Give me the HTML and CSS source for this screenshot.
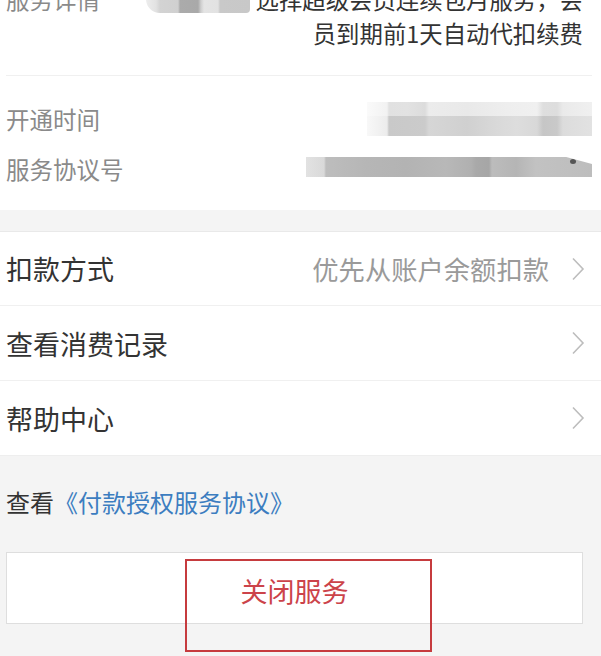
FILE: index.html
```html
<!DOCTYPE html>
<html lang="zh-CN">
<head>
<meta charset="utf-8">
<title>服务详情</title>
<link rel="stylesheet" href="styles.css">
</head>
<body>
<div class="page">
  <section class="card detail">
    <div class="detail-row">
      <span class="label">服务详情</span>
      <span class="pill"></span>
      <p class="detail-text">选择超级会员连续包月服务，会<br>员到期前1天自动代扣续费</p>
    </div>
    <div class="info">
      <div class="info-row"><span class="label">开通时间</span><span class="blur blur-time"></span></div>
      <div class="info-row"><span class="label">服务协议号</span><span class="blur blur-no"><span class="dot"></span></span></div>
    </div>
  </section>

  <section class="card menu">
    <div class="menu-row">
      <span class="menu-label">扣款方式</span>
      <span class="menu-value">优先从账户余额扣款</span>
      <svg class="chev" viewBox="0 0 14 24" width="14" height="24"><polyline points="2,1.5 12,12 2,22.5"/></svg>
    </div>
    <div class="menu-row">
      <span class="menu-label">查看消费记录</span>
      <svg class="chev" viewBox="0 0 14 24" width="14" height="24"><polyline points="2,1.5 12,12 2,22.5"/></svg>
    </div>
    <div class="menu-row">
      <span class="menu-label">帮助中心</span>
      <svg class="chev" viewBox="0 0 14 24" width="14" height="24"><polyline points="2,1.5 12,12 2,22.5"/></svg>
    </div>
  </section>

  <p class="agreement">查看<a class="link">《付款授权服务协议》</a></p>

  <button class="close-btn">关闭服务</button>

  <div class="annotation"></div>
</div>
</body>
</html>
```

FILE: styles.css
```css
* { box-sizing: border-box; }
html, body { margin: 0; padding: 0; }
body {
  background: #f4f4f4;
  font-family: "Noto Sans CJK SC", "Noto Sans", sans-serif;
  width: 601px;
  height: 656px;
  overflow: hidden;
}
.page { position: relative; width: 601px; height: 656px; overflow: hidden; }

.card { background: #fff; }

.detail { padding: 0 9px 0 6px; font-size: 23.5px; }
.detail-row {
  display: flex;
  align-items: flex-start;
  margin-top: -18px;
  padding-bottom: 25px;
  border-bottom: 1px solid #f0f0f0;
  line-height: 34px;
}
.label { color: #8a8a8a; line-height: inherit; }
.pill {
  width: 104px;
  height: 28px;
  margin: 3px 0 0 46px;
  border-radius: 14px 0 4px 14px;
  background: linear-gradient(90deg, #ededed 0, #e2e2e2 10px, #d3d3d3 14px, #d0d0d0 32px, #ababab 34px, #a9a9a9 52px, #cfcfcf 55px, #e4e4e4 58px, #e2e2e2 72px, #c9c9c9 74px, #c8c8c8 104px);
}
.detail-text {
  flex: 1;
  margin: 0 9px 0 0;
  text-align: right;
  white-space: nowrap;
  color: #333;
  font-size: 23.4px;
  line-height: 34px;
}

.info { padding: 18px 0 16px; }
.info-row { display: flex; align-items: center; height: 50px; }
.blur { margin-left: auto; display: block; position: relative; }
.blur-time {
  width: 225px;
  height: 34px;
  background:
    linear-gradient(90deg, #fafafa 0, #f2f2f2 20px, #e1e1e1 22px, #e2e2e2 40px, #dcdcdc 58px, #ececec 62px, #e9e9e9 100px, #eeeeee 140px, #f0f0f0 170px, #dedede 176px, #dddddd 190px, #eaeaea 196px, #f0f0f0 225px) top / 100% 14px no-repeat,
    linear-gradient(90deg, #f8f8f8 0, #ececec 20px, #c9c9c9 22px, #cbcbcb 58px, #d6d6d6 62px, #d0d0d0 100px, #d9d9d9 130px, #dddddd 150px, #d8d8d8 170px, #c6c6c6 176px, #c9c9c9 190px, #dcdcdc 196px, #e2e2e2 225px) bottom / 100% 20px no-repeat;
}
.blur-no {
  width: 286px;
  height: 20px;
  margin-top: -4px;
  background: linear-gradient(90deg, #e2e2e2 0, #d9d9d9 18px, #bdbdbd 20px, #b6b6b6 60px, #b3b3b3 100px, #b8b8b8 140px, #b0b0b0 165px, #a9a9a9 170px, #a6a6a6 183px, #bcbcbc 186px, #b5b5b5 210px, #c2c2c2 230px, #bdbdbd 286px);
  clip-path: polygon(0 0, 84% 0, 91% 0, 100% 35%, 100% 100%, 0 100%);
}
.dot {
  position: absolute;
  right: 16px;
  top: 2px;
  width: 6px;
  height: 5px;
  border-radius: 50%;
  background: #555;
}

.menu {
  margin-top: 21px;
  border-top: 1px solid #e9e9e9;
  border-bottom: 1px solid #eeeeee;
}
.menu-row {
  display: flex;
  align-items: center;
  height: 75px;
  padding: 0 16px 0 6px;
  border-bottom: 1px solid #f0f0f0;
}
.menu-row:last-child { border-bottom: none; height: 74px; }
.menu-row:first-child { height: 74px; }
.menu-label { font-size: 27px; color: #333; }
.menu-value { margin-left: auto; font-size: 26.3px; color: #9a9a9a; }
.chev { margin-left: auto; display: block; }
.menu-value + .chev { margin-left: 22px; }
.chev polyline { fill: none; stroke: #bdbdbd; stroke-width: 1.6; stroke-linejoin: miter; }

.agreement {
  margin: 0;
  padding: 29px 6px 0;
  line-height: 34px;
  font-size: 24px;
  color: #333;
}
.link { color: #3c7dc0; text-decoration: none; }

.close-btn {
  display: block;
  margin: 33px 0 0 6px;
  width: 577px;
  height: 72px;
  padding: 6px 0 0;
  background: #fff;
  border: 1px solid #dedede;
  border-radius: 0;
  font-family: "Noto Sans CJK SC", "Noto Sans", sans-serif;
  font-size: 27px;
  line-height: 64px;
  color: #cc434a;
}

.annotation {
  position: absolute;
  left: 185px;
  top: 559px;
  width: 247px;
  height: 93px;
  border: 2px solid #c63b3e;
}
```
